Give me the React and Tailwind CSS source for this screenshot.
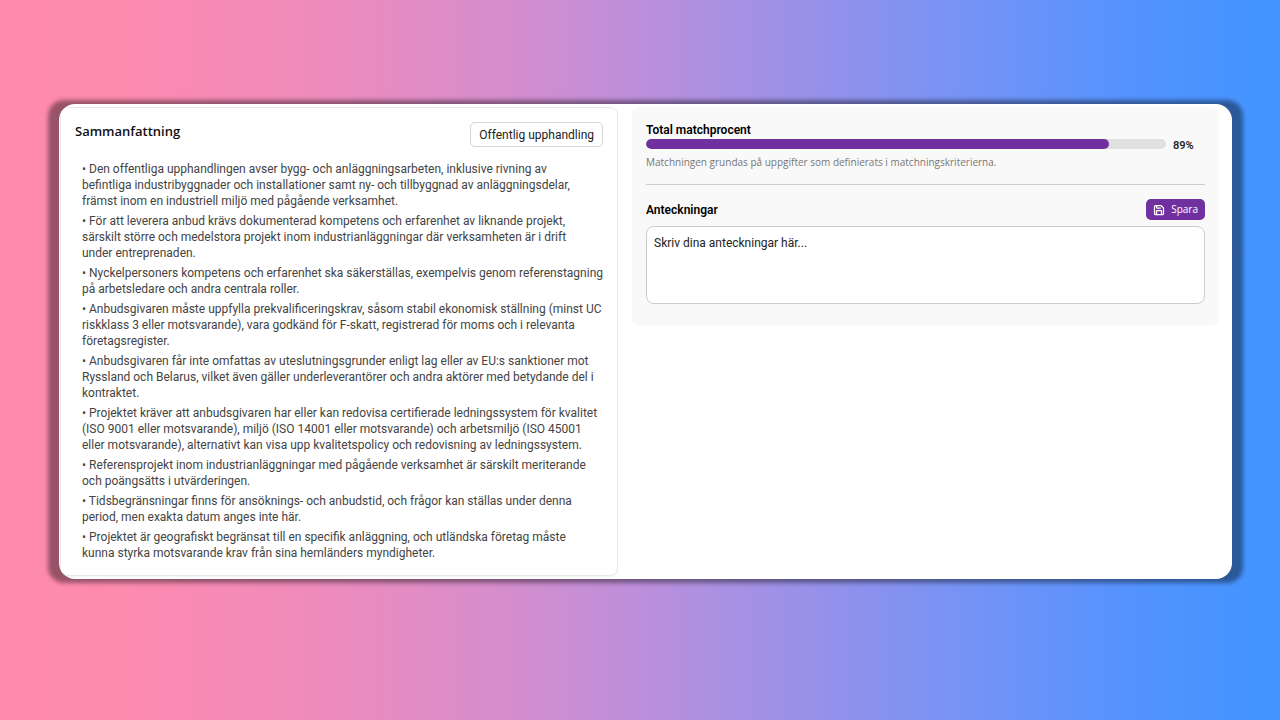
import React, { useState } from 'react';
import { Save } from 'lucide-react';

const MATCH_PERCENT = 89;

const SUMMARY = [
  'Den offentliga upphandlingen avser bygg- och anläggningsarbeten, inklusive rivning av\nbefintliga industribyggnader och installationer samt ny- och tillbyggnad av anläggningsdelar,\nfrämst inom en industriell miljö med pågående verksamhet.',
  'För att leverera anbud krävs dokumenterad kompetens och erfarenhet av liknande projekt,\nsärskilt större och medelstora projekt inom industrianläggningar där verksamheten är i drift\nunder entreprenaden.',
  'Nyckelpersoners kompetens och erfarenhet ska säkerställas, exempelvis genom referenstagning\npå arbetsledare och andra centrala roller.',
  'Anbudsgivaren måste uppfylla prekvalificeringskrav, såsom stabil ekonomisk ställning (minst UC\nriskklass 3 eller motsvarande), vara godkänd för F-skatt, registrerad för moms och i relevanta\nföretagsregister.',
  'Anbudsgivaren får inte omfattas av uteslutningsgrunder enligt lag eller av EU:s sanktioner mot\nRyssland och Belarus, vilket även gäller underleverantörer och andra aktörer med betydande del i\nkontraktet.',
  'Projektet kräver att anbudsgivaren har eller kan redovisa certifierade ledningssystem för kvalitet\n(ISO 9001 eller motsvarande), miljö (ISO 14001 eller motsvarande) och arbetsmiljö (ISO 45001\neller motsvarande), alternativt kan visa upp kvalitetspolicy och redovisning av ledningssystem.',
  'Referensprojekt inom industrianläggningar med pågående verksamhet är särskilt meriterande\noch poängsätts i utvärderingen.',
  'Tidsbegränsningar finns för ansöknings- och anbudstid, och frågor kan ställas under denna\nperiod, men exakta datum anges inte här.',
  'Projektet är geografiskt begränsat till en specifik anläggning, och utländska företag måste\nkunna styrka motsvarande krav från sina hemländers myndigheter.',
];

function SummaryCard() {
  return (
    <section className="rounded-lg border border-[#e8e8e8] bg-white p-3.5 shadow-xs">
      <div className="flex items-start justify-between">
        <h2 className="font-['Open_Sans',sans-serif] text-[13px] leading-[18px] font-semibold text-[#111]">Sammanfattning</h2>
        <button type="button" className="h-[25px] rounded-[5px] border border-[#d4d4d4] bg-white px-2 text-xs text-[#222]">
          Offentlig upphandling
        </button>
      </div>
      <ul className="mt-3.5 space-y-1 pl-[7px] text-xs leading-4 whitespace-pre-line text-[#444]">
        {SUMMARY.map((item) => (
          <li key={item}>{`• ${item}`}</li>
        ))}
      </ul>
    </section>
  );
}

function MatchCard() {
  const [notes, setNotes] = useState('');

  return (
    <section className="rounded-lg bg-[#f9f9f9] px-3.5 pt-[15px] pb-[22px]">
      <h2 className="text-xs leading-4 font-semibold text-black">Total matchprocent</h2>
      <div className="flex items-start gap-[7px]">
        <div className="mt-px h-2.5 flex-1 overflow-hidden rounded-full bg-[#e0e0e0]">
          <div className="h-full rounded-full bg-[#7030a0]" style={{ width: `${MATCH_PERCENT}%` }} />
        </div>
        <span className="w-8 text-[11px] leading-4 font-semibold text-[#222]">{`${MATCH_PERCENT}%`}</span>
      </div>
      <p className="font-['Open_Sans',sans-serif] text-[10px] leading-4 text-[#777]">
        Matchningen grundas på uppgifter som definierats i matchningskriterierna.
      </p>

      <hr className="my-3.5 border-[#ccc]" />

      <div className="flex items-center justify-between">
        <label htmlFor="notes" className="text-xs font-semibold text-black">Anteckningar</label>
        <button type="button" className="flex h-[21px] items-center gap-1.5 rounded-[5px] bg-[#7030a0] px-[7px] font-['Open_Sans',sans-serif] text-[10px] text-white">
          <Save className="size-3" strokeWidth={2.5} />
          Spara
        </button>
      </div>
      <textarea
        id="notes"
        value={notes}
        onChange={(e) => setNotes(e.target.value)}
        placeholder="Skriv dina anteckningar här..."
        className="mt-1.5 block h-[78px] w-full resize-none rounded-lg border border-[#ccc] bg-white px-[7px] py-2 text-xs leading-4 placeholder:text-[#222]"
      />
    </section>
  );
}

export default function App() {
  return (
    <main className="min-h-screen bg-[linear-gradient(90deg,#ff8aad_0%,#fd8aaf_10%,#ee8bbc_25%,#d68dcc_39%,#bc8fdb_50%,#7793f5_75%,#5593fe_88%,#4194ff_100%)] pt-[104px] pr-12 pb-12 pl-[59px] font-['Roboto','Open_Sans',sans-serif]">
      <div className="relative isolate">
        {/* Soft shadow, wider at the sides than above and below */}
        <div className="absolute -inset-x-[11px] -inset-y-1 -z-10 rounded-2xl bg-black/40 blur-[2px]" />
        <div className="grid grid-cols-[558fr_587fr] items-start gap-3.5 overflow-hidden rounded-2xl bg-white py-[3px] pr-[13px] pl-px">
          <SummaryCard />
          <MatchCard />
        </div>
      </div>
    </main>
  );
}
